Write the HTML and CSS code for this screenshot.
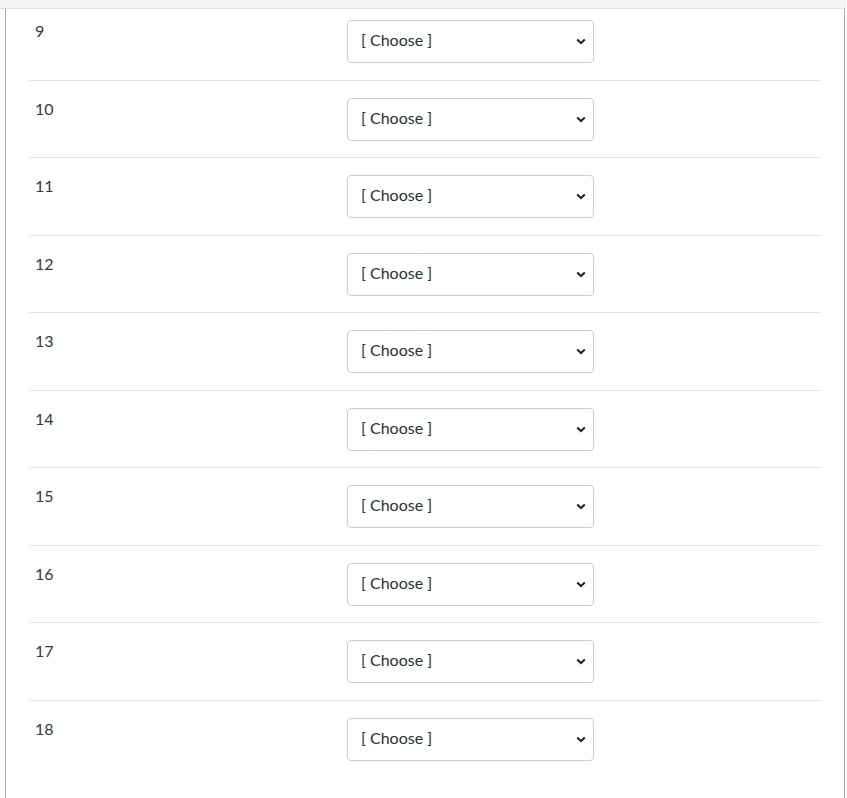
FILE: index.html
```html
<!DOCTYPE html>
<html lang="en">
<head>
<meta charset="utf-8">
<title>Matching</title>
<link rel="stylesheet" href="styles.css">
</head>
<body>
<div class="topbar"></div>
<div class="panel">
  <div class="row first">
    <div class="label">9</div>
    <div class="select-wrap">
      <select class="choice"><option>[ Choose ]</option></select>
      <svg class="chev" width="10" height="7" viewBox="0 0 10 7"><path d="M1.2 1.4 L5 5 L8.8 1.4" fill="none" stroke="#222" stroke-width="2"/></svg>
    </div>
  </div>
  <div class="row">
    <div class="label">10</div>
    <div class="select-wrap">
      <select class="choice"><option>[ Choose ]</option></select>
      <svg class="chev" width="10" height="7" viewBox="0 0 10 7"><path d="M1.2 1.4 L5 5 L8.8 1.4" fill="none" stroke="#222" stroke-width="2"/></svg>
    </div>
  </div>
  <div class="row">
    <div class="label">11</div>
    <div class="select-wrap">
      <select class="choice"><option>[ Choose ]</option></select>
      <svg class="chev" width="10" height="7" viewBox="0 0 10 7"><path d="M1.2 1.4 L5 5 L8.8 1.4" fill="none" stroke="#222" stroke-width="2"/></svg>
    </div>
  </div>
  <div class="row">
    <div class="label">12</div>
    <div class="select-wrap">
      <select class="choice"><option>[ Choose ]</option></select>
      <svg class="chev" width="10" height="7" viewBox="0 0 10 7"><path d="M1.2 1.4 L5 5 L8.8 1.4" fill="none" stroke="#222" stroke-width="2"/></svg>
    </div>
  </div>
  <div class="row">
    <div class="label">13</div>
    <div class="select-wrap">
      <select class="choice"><option>[ Choose ]</option></select>
      <svg class="chev" width="10" height="7" viewBox="0 0 10 7"><path d="M1.2 1.4 L5 5 L8.8 1.4" fill="none" stroke="#222" stroke-width="2"/></svg>
    </div>
  </div>
  <div class="row">
    <div class="label">14</div>
    <div class="select-wrap">
      <select class="choice"><option>[ Choose ]</option></select>
      <svg class="chev" width="10" height="7" viewBox="0 0 10 7"><path d="M1.2 1.4 L5 5 L8.8 1.4" fill="none" stroke="#222" stroke-width="2"/></svg>
    </div>
  </div>
  <div class="row">
    <div class="label">15</div>
    <div class="select-wrap">
      <select class="choice"><option>[ Choose ]</option></select>
      <svg class="chev" width="10" height="7" viewBox="0 0 10 7"><path d="M1.2 1.4 L5 5 L8.8 1.4" fill="none" stroke="#222" stroke-width="2"/></svg>
    </div>
  </div>
  <div class="row">
    <div class="label">16</div>
    <div class="select-wrap">
      <select class="choice"><option>[ Choose ]</option></select>
      <svg class="chev" width="10" height="7" viewBox="0 0 10 7"><path d="M1.2 1.4 L5 5 L8.8 1.4" fill="none" stroke="#222" stroke-width="2"/></svg>
    </div>
  </div>
  <div class="row">
    <div class="label">17</div>
    <div class="select-wrap">
      <select class="choice"><option>[ Choose ]</option></select>
      <svg class="chev" width="10" height="7" viewBox="0 0 10 7"><path d="M1.2 1.4 L5 5 L8.8 1.4" fill="none" stroke="#222" stroke-width="2"/></svg>
    </div>
  </div>
  <div class="row">
    <div class="label">18</div>
    <div class="select-wrap">
      <select class="choice"><option>[ Choose ]</option></select>
      <svg class="chev" width="10" height="7" viewBox="0 0 10 7"><path d="M1.2 1.4 L5 5 L8.8 1.4" fill="none" stroke="#222" stroke-width="2"/></svg>
    </div>
  </div>
</div>
</body>
</html>
```

FILE: styles.css
```css
html, body {
  margin: 0;
  padding: 0;
  background: #ffffff;
}
body {
  font-family: Lato, "Open Sans", "Liberation Sans", sans-serif;
  font-size: 16px;
  line-height: 24px;
  color: #2d3b45;
  height: 798px;
  overflow: hidden;
}
.topbar {
  height: 8px;
  width: 846px;
  background: #f3f4f4;
  border-bottom: 1px solid #dcdedf;
}
.panel {
  margin-left: 5px;
  width: 840px;
  height: 789px;
  border-left: 1px solid #a9a9a9;
  border-right: 1px solid #a9a9a9;
  padding: 0 23px;
  box-sizing: border-box;
}
.row {
  display: grid;
  grid-template-columns: 318px 247px;
  padding: 16px 0 16.5px;
  border-top: 1px solid #e3e4e5;
}
.row.first {
  border-top: none;
  padding-top: 10px;
  padding-bottom: 16.5px;
}
.label {
  padding-left: 6px;
}
.select-wrap {
  position: relative;
  margin-top: 1px;
  height: 43px;
}
.choice {
  appearance: none;
  -webkit-appearance: none;
  display: block;
  width: 247px;
  height: 43px;
  margin: 0;
  padding: 0 30px 4px 13px;
  border: 1px solid #c7cdd1;
  border-radius: 4px;
  background: #ffffff;
  font-family: Lato, "Open Sans", "Liberation Sans", sans-serif;
  font-size: 16px;
  color: #26323b;
  box-sizing: border-box;
}
.chev {
  position: absolute;
  right: 8px;
  top: 18px;
  pointer-events: none;
}
```
